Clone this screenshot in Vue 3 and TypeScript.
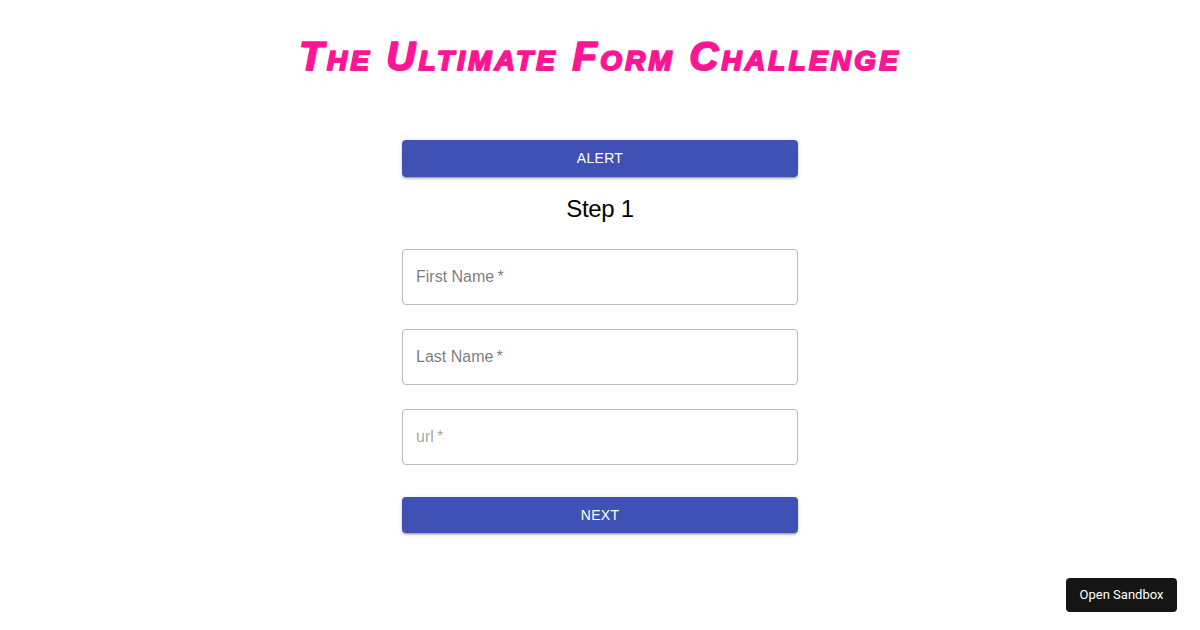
<script setup lang="ts">
interface Field { label: string; muted?: boolean }
const fields: Field[] = [
  { label: 'First Name' },
  { label: 'Last Name' },
  { label: 'url', muted: true },
]
</script>

<template>
  <div class="page">
    <h1 class="title">The Ultimate Form Challenge</h1>
    <main class="form">
      <button class="btn alert" type="button">Alert</button>
      <h2 class="step">Step 1</h2>
      <div class="fields">
        <label v-for="f in fields" :key="f.label" class="field">
          <span class="label" :class="{ muted: f.muted }">{{ f.label }}&thinsp;*</span>
        </label>
      </div>
      <button class="btn next" type="button">Next</button>
    </main>
    <a class="sandbox">Open Sandbox</a>
  </div>
</template>

<style>
html, body { margin: 0; background: #fff; }
</style>

<style scoped>
.page {
  width: 1200px;
  height: 630px;
  box-sizing: border-box;
  padding-top: 32px;
  display: flex;
  flex-direction: column;
  align-items: center;
  font-family: "Liberation Sans", Arial, sans-serif;
  overflow: hidden;
}
.title {
  margin: 0;
  height: 48px;
  line-height: 48px;
  font-family: "Liberation Sans", Arial, sans-serif;
  font-size: 40px;
  font-weight: 700;
  font-style: italic;
  font-variant: small-caps;
  letter-spacing: 3.2px;
  white-space: nowrap;
  color: #ff1493;
  -webkit-text-stroke: 1.6px #ff1493;
  text-shadow: 1px 1px 1px #5a3fc0;
}
.form {
  width: 396px;
  margin-top: 60px;
  display: flex;
  flex-direction: column;
}
.btn {
  display: block;
  width: 100%;
  border: 0;
  border-radius: 4px;
  background: #3f51b5;
  color: #fff;
  font-family: inherit;
  font-size: 14px;
  font-weight: 400;
  text-transform: uppercase;
  letter-spacing: 0.3px;
  padding: 0 0 2px;
  box-shadow: 0 3px 1px -2px rgba(0,0,0,.2), 0 2px 2px 0 rgba(0,0,0,.14), 0 1px 5px 0 rgba(0,0,0,.12);
}
.alert { height: 37px; }
.next { height: 36px; margin-top: 32px; padding: 0; }
.step {
  margin: 16px 0 0;
  height: 32px;
  line-height: 32px;
  text-align: center;
  font-size: 24px;
  font-weight: 400;
  letter-spacing: -0.3px;
  color: #000;
}
.fields {
  margin-top: 24px;
  display: flex;
  flex-direction: column;
  gap: 24px;
}
.field {
  display: flex;
  align-items: center;
  height: 56px;
  box-sizing: border-box;
  padding: 0 13px;
  border: 1px solid #bdbdbd;
  border-radius: 4px;
}
.label {
  font-size: 16px;
  color: rgba(0,0,0,.54);
  white-space: pre;
}
.label.muted { color: rgba(0,0,0,.38); }
.sandbox {
  position: fixed;
  right: 23px;
  bottom: 18px;
  width: 111px;
  height: 34px;
  box-sizing: border-box;
  padding-bottom: 2px;
  display: flex;
  align-items: center;
  justify-content: center;
  background: #151515;
  border-radius: 4px;
  color: #fff;
  font-family: Roboto, sans-serif;
  font-size: 13px;
}
</style>
